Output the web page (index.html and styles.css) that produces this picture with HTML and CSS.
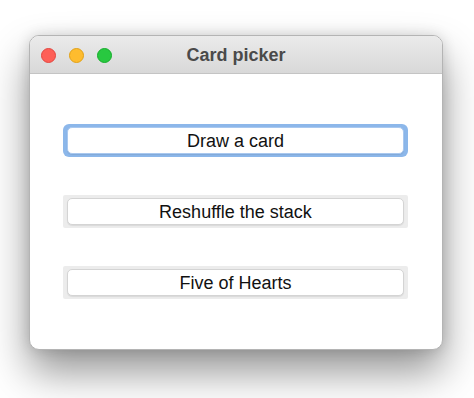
FILE: index.html
```html
<!DOCTYPE html>
<html lang="en">
<head>
    <meta charset="UTF-8">
    <meta name="viewport" content="width=device-width, initial-scale=1.0">
    <title>Card picker</title>
    <link rel="stylesheet" href="styles.css">
</head>
<body>
    <div class="window">
        <div class="titlebar">
            <div class="lights">
                <span class="light red"></span>
                <span class="light yellow"></span>
                <span class="light green"></span>
            </div>
            <div class="title">Card picker</div>
        </div>
        <div class="content">
            <div class="slot focused">
                <button class="btn">Draw a card</button>
            </div>
            <div class="slot">
                <button class="btn">Reshuffle the stack</button>
            </div>
            <div class="slot">
                <button class="btn">Five of Hearts</button>
            </div>
        </div>
    </div>
</body>
</html>
```

FILE: styles.css
```css
* {
    margin: 0;
    padding: 0;
    box-sizing: border-box;
    font-family: "Liberation Sans", Arial, sans-serif;
}

body {
    background: #ffffff;
    width: 474px;
    height: 398px;
    overflow: hidden;
    padding: 35px 0 0 29px;
}

.window {
    width: 414px;
    height: 315px;
    background: #ffffff;
    border-radius: 10px;
    border: 1px solid #b4b4b4;
    box-shadow: 0 22px 42px rgba(0,0,0,0.42), 0 0 14px rgba(0,0,0,0.14);
    overflow: hidden;
}

.titlebar {
    height: 38px;
    background: linear-gradient(180deg, #ebebeb 0%, #d8d8d8 100%);
    border-bottom: 1px solid #c4c4c4;
    position: relative;
    display: flex;
    align-items: center;
    justify-content: center;
}

.lights {
    position: absolute;
    left: 11px;
    top: 12px;
    display: flex;
    gap: 13px;
}

.light {
    width: 15px;
    height: 15px;
    border-radius: 50%;
    display: block;
}

.red {
    background: #fe5f57;
    border: 1px solid #e2463f;
}

.yellow {
    background: #febc2e;
    border: 1px solid #e1a116;
}

.green {
    background: #28c840;
    border: 1px solid #14ae2a;
}

.title {
    font-size: 18px;
    font-weight: bold;
    color: #4a4a4a;
    margin-top: 2px;
}

.content {
    padding: 50px 34px 0 33px;
    display: flex;
    flex-direction: column;
    gap: 38px;
}

.slot {
    height: 33px;
    background: #ececec;
    padding: 3px 4px;
    border-radius: 2px;
}

.slot.focused {
    background: #8cb7ea;
    border-radius: 6px;
}

.btn {
    width: 100%;
    height: 100%;
    background: #ffffff;
    border: 1px solid #d4d4d4;
    border-radius: 5px;
    box-shadow: 0 1px 1px rgba(0,0,0,0.08);
    font-size: 18px;
    color: #111111;
    padding-top: 1px;
}

.focused .btn {
    border-color: #a9c8ef;
}
```
